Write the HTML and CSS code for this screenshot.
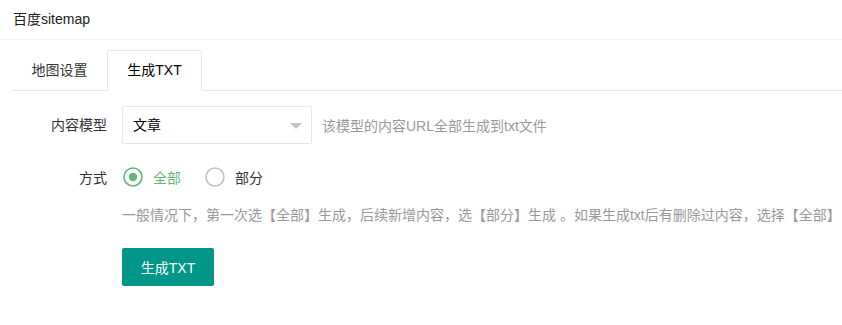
FILE: index.html
```html
<!DOCTYPE html>
<html lang="zh-CN">
<head>
<meta charset="utf-8">
<title>百度sitemap</title>
<link rel="stylesheet" href="styles.css">
</head>
<body>
<div class="header">百度sitemap</div>
<div class="main">
  <ul class="tabs">
    <li class="tab">地图设置</li>
    <li class="tab active">生成TXT</li>
  </ul>
  <div class="content">
    <div class="row">
      <label class="label">内容模型</label>
      <div class="select">
        <span class="select-value">文章</span>
        <i class="edge"></i>
      </div>
      <span class="aux">该模型的内容URL全部生成到txt文件</span>
    </div>
    <div class="row">
      <label class="label">方式</label>
      <div class="radios">
        <span class="radio checked">
          <svg class="radio-icon" width="20" height="20" viewBox="0 0 20 20"><circle cx="10" cy="10" r="9" fill="none" stroke="#5FB878" stroke-width="1.6"/><circle cx="10" cy="10" r="4.2" fill="#5FB878"/></svg>
          <span>全部</span>
        </span>
        <span class="radio">
          <svg class="radio-icon" width="20" height="20" viewBox="0 0 20 20"><circle cx="10" cy="10" r="9" fill="none" stroke="#c2c2c2" stroke-width="1.6"/></svg>
          <span>部分</span>
        </span>
      </div>
    </div>
    <div class="row">
      <div class="offset desc">一般情况下，第一次选【全部】生成，后续新增内容，选【部分】生成 。如果生成txt后有删除过内容，选择【全部】</div>
    </div>
    <div class="row">
      <div class="offset"><button class="btn" type="button">生成TXT</button></div>
    </div>
  </div>
</div>
</body>
</html>
```

FILE: styles.css
```css
* { box-sizing: border-box; }
html, body {
  margin: 0;
  padding: 0;
  background: #fff;
  font-family: "Liberation Sans", "Noto Sans CJK SC", sans-serif;
  font-size: 14px;
  color: #333;
  overflow: hidden;
}
.header {
  height: 40px;
  line-height: 39px;
  padding-left: 13px;
  border-bottom: 1px solid #f2f2f2;
  color: #222;
}
.main {
  padding-left: 12px;
  margin-top: 10px;
}
.tabs {
  display: flex;
  margin: 0;
  padding: 0;
  list-style: none;
  height: 41px;
  border-bottom: 1px solid #e6e6e6;
}
.tab {
  height: 41px;
  line-height: 40px;
  padding: 0;
  width: 95px;
  white-space: nowrap;
  text-align: center;
  color: #333;
}
.tab.active {
  color: #000;
  background: #fff;
  border: 1px solid #e6e6e6;
  border-bottom-color: #fff;
  border-radius: 2px 2px 0 0;
  line-height: 38px;
}
.content {
  padding-top: 15px;
}
.row {
  display: flex;
  align-items: center;
  margin-bottom: 15px;
  white-space: nowrap;
}
.label {
  width: 110px;
  padding: 9px 15px;
  line-height: 20px;
  text-align: right;
  color: #333;
}
.select {
  position: relative;
  width: 190px;
  height: 38px;
  border: 1px solid #e6e6e6;
  border-radius: 2px;
  padding-left: 10px;
  line-height: 36px;
  color: #000;
  margin-right: 10px;
}
.edge {
  position: absolute;
  right: 9px;
  top: 16px;
  width: 0;
  height: 0;
  border-style: solid;
  border-width: 6px 6px 0 6px;
  border-color: #c2c2c2 transparent transparent transparent;
}
.aux {
  color: #999;
}
.radios {
  display: flex;
  align-items: center;
  height: 38px;
  padding-bottom: 3px;
}
.radio {
  display: flex;
  align-items: center;
  margin-right: 23px;
  color: #333;
}
.radio-icon {
  display: block;
  margin: 0 10px 0 1px;
}
.radio.checked { color: #5FB878; }
.offset {
  margin-left: 110px;
}
.desc {
  color: #999;
  line-height: 20px;
  padding: 0;
  margin-top: -7px;
  margin-bottom: 8px;
}
.btn {
  display: block;
  width: 92px;
  height: 38px;
  border: 0;
  border-radius: 2px;
  background: #009688;
  color: #fff;
  font-family: inherit;
  font-size: 14px;
  padding: 0;
  cursor: pointer;
}
```
